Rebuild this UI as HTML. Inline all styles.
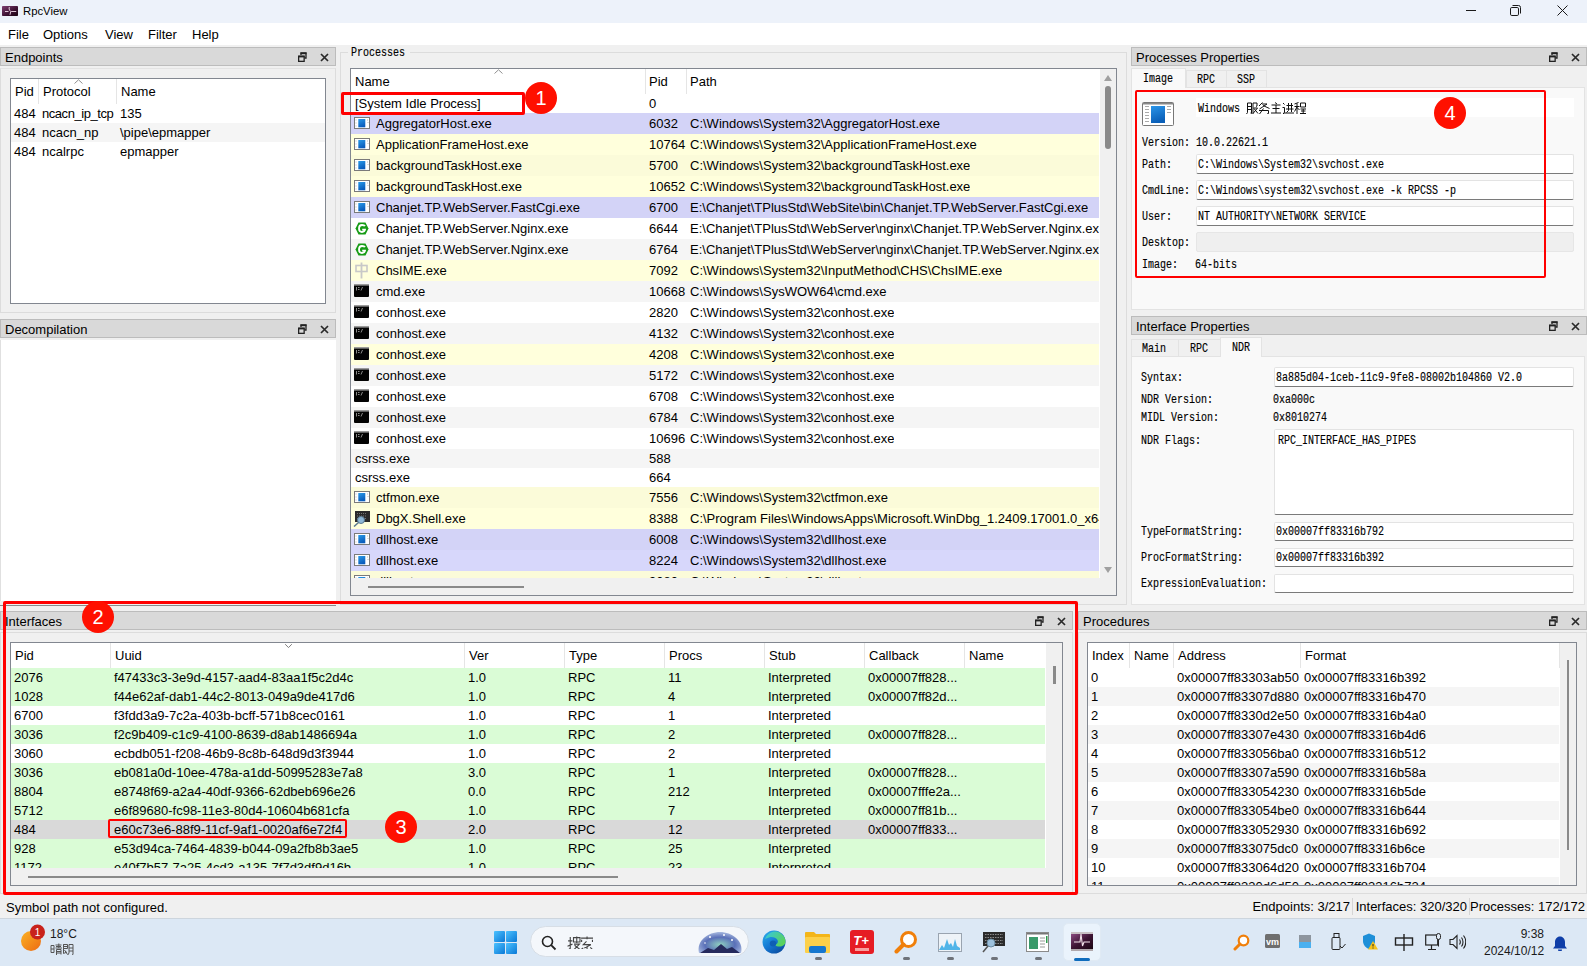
<!DOCTYPE html><html><head><meta charset="utf-8"><style>
*{box-sizing:border-box}
body{margin:0;width:1587px;height:966px;position:relative;overflow:hidden;background:#f0f0f0;font-family:"Liberation Sans",sans-serif;font-size:13px;color:#000}
.t{position:absolute;white-space:nowrap;line-height:16px}
.dt{position:absolute;height:19px;background:#d9d9d9;border:1px solid #bcbcbc;}
.dtt{position:absolute;left:4px;top:2px;line-height:16px;font-size:13px;color:#000}
.m{font-family:"Liberation Mono",monospace;font-size:11px;letter-spacing:-0.6px}
.mm{font-family:"Liberation Mono",monospace;font-size:12px;letter-spacing:0;line-height:16px;transform:scaleX(0.8333);transform-origin:0 0;-webkit-text-stroke:0.15px #000}
.tbl{position:absolute;background:#fff;border:1px solid #828790;overflow:hidden}
.hd{position:absolute;left:0;top:0;height:25px;width:100%;background:#fff}
.hc{position:absolute;top:0;height:25px;line-height:25px;padding-left:4px;border-right:1px solid #e5e5e5;white-space:nowrap}
.row{position:absolute;left:0;white-space:nowrap}
.c{position:absolute;top:0;white-space:nowrap}
</style></head><body>
<svg width="0" height="0" style="position:absolute"><defs><linearGradient id="exeg" x1="0" y1="0" x2="0.4" y2="1"><stop offset="0" stop-color="#2a9ae8"/><stop offset="1" stop-color="#0a5cbc"/></linearGradient></defs></svg>
<div style="position:absolute;left:0px;top:0px;width:1587px;height:23px;background:#edf2fa"></div>
<svg style="position:absolute;left:2px;top:6px" width="16" height="10" viewBox="0 0 16 10"><defs><linearGradient id="rg" x1="0" y1="0" x2="1" y2="1"><stop offset="0" stop-color="#7e3f72"/><stop offset="0.6" stop-color="#3a1030"/><stop offset="1" stop-color="#1c0612"/></linearGradient></defs><rect x="0" y="0" width="16" height="10" rx="0.8" fill="url(#rg)"/><path d="M3 5.5h3.5M7.5 1c-.8 1-.5 3 1.2 4.5M8.7 5.5L8 8.8M9.2 5.5h5" fill="none" stroke="#f2dcea" stroke-width="0.9"/></svg>
<div class="t" style="left:23px;top:4px;font-size:11.3px;line-height:14px">RpcView</div>
<div style="position:absolute;left:1466px;top:10px;width:10px;height:1px;background:#1a1a1a"></div>
<svg style="position:absolute;left:1510px;top:5px" width="11" height="11" viewBox="0 0 11 11"><rect x="0.5" y="2.5" width="8" height="8" rx="1.3" fill="none" stroke="#1a1a1a" stroke-width="1"/><path d="M2.5 0.5h6a2 2 0 0 1 2 2v6" fill="none" stroke="#1a1a1a" stroke-width="1"/></svg>
<svg style="position:absolute;left:1557px;top:5px" width="11" height="11" viewBox="0 0 11 11"><path d="M0.5 0.5L10.5 10.5M10.5 0.5L0.5 10.5" stroke="#1a1a1a" stroke-width="1"/></svg>
<div style="position:absolute;left:0px;top:23px;width:1587px;height:22px;background:#fff"></div>
<div class="t" style="left:8px;top:27px;font-size:13px;line-height:16px">File</div>
<div class="t" style="left:43px;top:27px;font-size:13px;line-height:16px">Options</div>
<div class="t" style="left:105px;top:27px;font-size:13px;line-height:16px">View</div>
<div class="t" style="left:148px;top:27px;font-size:13px;line-height:16px">Filter</div>
<div class="t" style="left:192px;top:27px;font-size:13px;line-height:16px">Help</div>
<div class="dt" style="left:0px;top:47px;width:336px;"><span class="dtt">Endpoints</span><div style="position:absolute;right:28px;top:4px;line-height:0"><svg width="9" height="10" viewBox="0 0 9 10"><path d="M3 3V1h5v5H6.5" fill="none" stroke="#222" stroke-width="1.3"/><path d="M2.5 1.4h6" stroke="#222" stroke-width="1.6"/><rect x="0.65" y="4.15" width="5.5" height="5.2" fill="none" stroke="#222" stroke-width="1.3"/><path d="M0.5 4.6h6" stroke="#222" stroke-width="1.6"/></svg></div><div style="position:absolute;right:6px;top:5px;line-height:0"><svg width="9" height="9" viewBox="0 0 9 9"><path d="M1 1L8 8M8 1L1 8" stroke="#2a2a2a" stroke-width="1.7"/></svg></div></div>
<div style="position:absolute;left:0px;top:68px;width:336px;height:245px;border:1px solid #dcdcdc;border-top-color:#e3e3e3;background:#f0f0f0"></div>
<div class="tbl" style="left:10px;top:78px;width:316px;height:226px;">
<div class="hd" style="width:315px;height:25px">
<div class="c" style="left:4px;top:0;height:25px;line-height:25px">Pid</div>
<div class="c" style="left:32px;top:0;height:25px;line-height:25px">Protocol</div>
<div class="c" style="left:110px;top:0;height:25px;line-height:25px">Name</div>
<div style="position:absolute;left:27px;top:0;width:1px;height:25px;background:#e5e5e5"></div>
<div style="position:absolute;left:105px;top:0;width:1px;height:25px;background:#e5e5e5"></div>
</div>
<div style="position:absolute;left:63px;top:0px;line-height:0"><svg width="9" height="5" viewBox="0 0 9 5"><path d="M0.5 4.5L4.5 0.8L8.5 4.5" fill="none" stroke="#909090" stroke-width="1"/></svg></div>
<div style="position:absolute;left:0;top:25px;width:315px;height:199px;overflow:hidden">
<div class="row" style="top:0px;height:19px;width:315px;background:#fff">
<div class="c" style="left:3px;height:19px;line-height:19px">484</div>
<div class="c" style="left:31px;height:19px;line-height:19px"><span style="letter-spacing:-0.45px">ncacn_ip_tcp</span></div>
<div class="c" style="left:109px;height:19px;line-height:19px">135</div>
</div>
<div class="row" style="top:19px;height:19px;width:315px;background:#f5f5f5">
<div class="c" style="left:3px;height:19px;line-height:19px">484</div>
<div class="c" style="left:31px;height:19px;line-height:19px"><span style="letter-spacing:0px">ncacn_np</span></div>
<div class="c" style="left:109px;height:19px;line-height:19px">\pipe\epmapper</div>
</div>
<div class="row" style="top:38px;height:19px;width:315px;background:#fff">
<div class="c" style="left:3px;height:19px;line-height:19px">484</div>
<div class="c" style="left:31px;height:19px;line-height:19px"><span style="letter-spacing:0px">ncalrpc</span></div>
<div class="c" style="left:109px;height:19px;line-height:19px">epmapper</div>
</div>
</div>

</div>
<div class="dt" style="left:0px;top:319px;width:336px;"><span class="dtt">Decompilation</span><div style="position:absolute;right:28px;top:4px;line-height:0"><svg width="9" height="10" viewBox="0 0 9 10"><path d="M3 3V1h5v5H6.5" fill="none" stroke="#222" stroke-width="1.3"/><path d="M2.5 1.4h6" stroke="#222" stroke-width="1.6"/><rect x="0.65" y="4.15" width="5.5" height="5.2" fill="none" stroke="#222" stroke-width="1.3"/><path d="M0.5 4.6h6" stroke="#222" stroke-width="1.6"/></svg></div><div style="position:absolute;right:6px;top:5px;line-height:0"><svg width="9" height="9" viewBox="0 0 9 9"><path d="M1 1L8 8M8 1L1 8" stroke="#2a2a2a" stroke-width="1.7"/></svg></div></div>
<div style="position:absolute;left:0px;top:340px;width:336px;height:261px;background:#fff;border-left:1px solid #e0e0e0"></div>
<div style="position:absolute;left:340px;top:52px;width:787px;height:553px;border:1px solid #dcdcdc"></div>
<div style="position:absolute;left:348px;top:46px;width:62px;height:12px;background:#f0f0f0"></div>
<div class="t mm" style="left:351px;top:45px;line-height:16px">Processes</div>
<div class="tbl" style="left:350px;top:68px;width:767px;height:528px;">
<div class="hd" style="width:748px;height:25px">
<div class="c" style="left:4px;top:0;height:25px;line-height:25px">Name</div>
<div class="c" style="left:298px;top:0;height:25px;line-height:25px">Pid</div>
<div class="c" style="left:339px;top:0;height:25px;line-height:25px">Path</div>
<div style="position:absolute;left:294px;top:0;width:1px;height:25px;background:#e5e5e5"></div>
<div style="position:absolute;left:335px;top:0;width:1px;height:25px;background:#e5e5e5"></div>
</div>
<div style="position:absolute;left:143px;top:0px;line-height:0"><svg width="9" height="5" viewBox="0 0 9 5"><path d="M0.5 4.5L4.5 0.8L8.5 4.5" fill="none" stroke="#909090" stroke-width="1"/></svg></div>
<div style="position:absolute;left:0;top:25px;width:748px;height:484px;overflow:hidden">
<div class="row" style="top:0px;height:19px;width:748px;background:#ffffff">
<div class="c" style="left:4px;height:19px;line-height:19px">[System Idle Process]</div>
<div class="c" style="left:298px;height:19px;line-height:19px">0</div>
<div class="c" style="left:339px;height:19px;line-height:19px"><span style="display:inline-block;max-width:409px;overflow:hidden"></span></div>
</div>
<div class="row" style="top:19px;height:21px;width:748px;background:#d3d3f7">
<div class="c" style="left:3px;height:21px;line-height:21px"><div style="position:absolute;left:0;top:4px;line-height:0"><svg width="16" height="12" viewBox="0 0 16 12"><rect x="0.5" y="0.5" width="15" height="11" fill="#fff" stroke="#7a7a7a"/><rect x="4.3" y="2" width="7" height="8.3" fill="url(#exeg)"/><path d="M2 2.5v1M2 5.5v1M2 8.5v1M13.5 2.5v1M13.5 5.5h1" stroke="#bbb"/></svg></div></div>
<div class="c" style="left:25px;height:21px;line-height:21px">AggregatorHost.exe</div>
<div class="c" style="left:298px;height:21px;line-height:21px">6032</div>
<div class="c" style="left:339px;height:21px;line-height:21px"><span style="display:inline-block;max-width:409px;overflow:hidden">C:\Windows\System32\AggregatorHost.exe</span></div>
</div>
<div class="row" style="top:40px;height:21px;width:748px;background:#ffffdc">
<div class="c" style="left:3px;height:21px;line-height:21px"><div style="position:absolute;left:0;top:4px;line-height:0"><svg width="16" height="12" viewBox="0 0 16 12"><rect x="0.5" y="0.5" width="15" height="11" fill="#fff" stroke="#7a7a7a"/><rect x="4.3" y="2" width="7" height="8.3" fill="url(#exeg)"/><path d="M2 2.5v1M2 5.5v1M2 8.5v1M13.5 2.5v1M13.5 5.5h1" stroke="#bbb"/></svg></div></div>
<div class="c" style="left:25px;height:21px;line-height:21px">ApplicationFrameHost.exe</div>
<div class="c" style="left:298px;height:21px;line-height:21px">10764</div>
<div class="c" style="left:339px;height:21px;line-height:21px"><span style="display:inline-block;max-width:409px;overflow:hidden">C:\Windows\System32\ApplicationFrameHost.exe</span></div>
</div>
<div class="row" style="top:61px;height:21px;width:748px;background:#fbfbd9">
<div class="c" style="left:3px;height:21px;line-height:21px"><div style="position:absolute;left:0;top:4px;line-height:0"><svg width="16" height="12" viewBox="0 0 16 12"><rect x="0.5" y="0.5" width="15" height="11" fill="#fff" stroke="#7a7a7a"/><rect x="4.3" y="2" width="7" height="8.3" fill="url(#exeg)"/><path d="M2 2.5v1M2 5.5v1M2 8.5v1M13.5 2.5v1M13.5 5.5h1" stroke="#bbb"/></svg></div></div>
<div class="c" style="left:25px;height:21px;line-height:21px">backgroundTaskHost.exe</div>
<div class="c" style="left:298px;height:21px;line-height:21px">5700</div>
<div class="c" style="left:339px;height:21px;line-height:21px"><span style="display:inline-block;max-width:409px;overflow:hidden">C:\Windows\System32\backgroundTaskHost.exe</span></div>
</div>
<div class="row" style="top:82px;height:21px;width:748px;background:#ffffdc">
<div class="c" style="left:3px;height:21px;line-height:21px"><div style="position:absolute;left:0;top:4px;line-height:0"><svg width="16" height="12" viewBox="0 0 16 12"><rect x="0.5" y="0.5" width="15" height="11" fill="#fff" stroke="#7a7a7a"/><rect x="4.3" y="2" width="7" height="8.3" fill="url(#exeg)"/><path d="M2 2.5v1M2 5.5v1M2 8.5v1M13.5 2.5v1M13.5 5.5h1" stroke="#bbb"/></svg></div></div>
<div class="c" style="left:25px;height:21px;line-height:21px">backgroundTaskHost.exe</div>
<div class="c" style="left:298px;height:21px;line-height:21px">10652</div>
<div class="c" style="left:339px;height:21px;line-height:21px"><span style="display:inline-block;max-width:409px;overflow:hidden">C:\Windows\System32\backgroundTaskHost.exe</span></div>
</div>
<div class="row" style="top:103px;height:21px;width:748px;background:#d3d3f7">
<div class="c" style="left:3px;height:21px;line-height:21px"><div style="position:absolute;left:0;top:4px;line-height:0"><svg width="16" height="12" viewBox="0 0 16 12"><rect x="0.5" y="0.5" width="15" height="11" fill="#fff" stroke="#7a7a7a"/><rect x="4.3" y="2" width="7" height="8.3" fill="url(#exeg)"/><path d="M2 2.5v1M2 5.5v1M2 8.5v1M13.5 2.5v1M13.5 5.5h1" stroke="#bbb"/></svg></div></div>
<div class="c" style="left:25px;height:21px;line-height:21px">Chanjet.TP.WebServer.FastCgi.exe</div>
<div class="c" style="left:298px;height:21px;line-height:21px">6700</div>
<div class="c" style="left:339px;height:21px;line-height:21px"><span style="display:inline-block;max-width:409px;overflow:hidden">E:\Chanjet\TPlusStd\WebSite\bin\Chanjet.TP.WebServer.FastCgi.exe</span></div>
</div>
<div class="row" style="top:124px;height:21px;width:748px;background:#ffffff">
<div class="c" style="left:4px;height:21px;line-height:21px"><div style="position:absolute;left:0;top:4px;line-height:0"><svg width="14" height="13" viewBox="0 0 14 13"><path d="M3.5 0.5h7l3 6-3 6h-7l-3-6z" fill="#169b16"/><path d="M10 4.2C9.5 3.2 8.5 3 7 3 5.2 3 4 4.5 4 6.5S5.2 10 7 10c1.6 0 2.7-.7 3-2.3H7.2" fill="none" stroke="#fff" stroke-width="1.8"/></svg></div></div>
<div class="c" style="left:25px;height:21px;line-height:21px">Chanjet.TP.WebServer.Nginx.exe</div>
<div class="c" style="left:298px;height:21px;line-height:21px">6644</div>
<div class="c" style="left:339px;height:21px;line-height:21px"><span style="display:inline-block;max-width:409px;overflow:hidden">E:\Chanjet\TPlusStd\WebServer\nginx\Chanjet.TP.WebServer.Nginx.exe</span></div>
</div>
<div class="row" style="top:145px;height:21px;width:748px;background:#f5f5f5">
<div class="c" style="left:4px;height:21px;line-height:21px"><div style="position:absolute;left:0;top:4px;line-height:0"><svg width="14" height="13" viewBox="0 0 14 13"><path d="M3.5 0.5h7l3 6-3 6h-7l-3-6z" fill="#169b16"/><path d="M10 4.2C9.5 3.2 8.5 3 7 3 5.2 3 4 4.5 4 6.5S5.2 10 7 10c1.6 0 2.7-.7 3-2.3H7.2" fill="none" stroke="#fff" stroke-width="1.8"/></svg></div></div>
<div class="c" style="left:25px;height:21px;line-height:21px">Chanjet.TP.WebServer.Nginx.exe</div>
<div class="c" style="left:298px;height:21px;line-height:21px">6764</div>
<div class="c" style="left:339px;height:21px;line-height:21px"><span style="display:inline-block;max-width:409px;overflow:hidden">E:\Chanjet\TPlusStd\WebServer\nginx\Chanjet.TP.WebServer.Nginx.exe</span></div>
</div>
<div class="row" style="top:166px;height:21px;width:748px;background:#ffffdc">
<div class="c" style="left:3px;height:21px;line-height:21px"><div style="position:absolute;left:0;top:2px;line-height:0"><svg width="16" height="17" viewBox="0 0 16 17"><rect x="2" y="3.5" width="11" height="6" fill="none" stroke="#c8c8c8" stroke-width="1.6"/><path d="M7.5 0.5v16" stroke="#c8c8c8" stroke-width="1.8"/></svg></div></div>
<div class="c" style="left:25px;height:21px;line-height:21px">ChsIME.exe</div>
<div class="c" style="left:298px;height:21px;line-height:21px">7092</div>
<div class="c" style="left:339px;height:21px;line-height:21px"><span style="display:inline-block;max-width:409px;overflow:hidden">C:\Windows\System32\InputMethod\CHS\ChsIME.exe</span></div>
</div>
<div class="row" style="top:187px;height:21px;width:748px;background:#f5f5f5">
<div class="c" style="left:3px;height:21px;line-height:21px"><div style="position:absolute;left:0;top:3px;line-height:0"><svg width="15" height="13" viewBox="0 0 15 13"><rect x="0" y="0" width="15" height="13" rx="1" fill="#030303"/><rect x="0" y="0" width="15" height="1.6" fill="#9a9a9a"/><path d="M2.5 3v3.5M4 3.5h1.5M4 5.5h1.5M7 6.5l1.5-3.5" stroke="#9a9a9a" stroke-width="0.9"/></svg></div></div>
<div class="c" style="left:25px;height:21px;line-height:21px">cmd.exe</div>
<div class="c" style="left:298px;height:21px;line-height:21px">10668</div>
<div class="c" style="left:339px;height:21px;line-height:21px"><span style="display:inline-block;max-width:409px;overflow:hidden">C:\Windows\SysWOW64\cmd.exe</span></div>
</div>
<div class="row" style="top:208px;height:21px;width:748px;background:#ffffff">
<div class="c" style="left:3px;height:21px;line-height:21px"><div style="position:absolute;left:0;top:3px;line-height:0"><svg width="15" height="13" viewBox="0 0 15 13"><rect x="0" y="0" width="15" height="13" rx="1" fill="#030303"/><rect x="0" y="0" width="15" height="1.6" fill="#9a9a9a"/><path d="M2.5 3v3.5M4 3.5h1.5M4 5.5h1.5M7 6.5l1.5-3.5" stroke="#9a9a9a" stroke-width="0.9"/></svg></div></div>
<div class="c" style="left:25px;height:21px;line-height:21px">conhost.exe</div>
<div class="c" style="left:298px;height:21px;line-height:21px">2820</div>
<div class="c" style="left:339px;height:21px;line-height:21px"><span style="display:inline-block;max-width:409px;overflow:hidden">C:\Windows\System32\conhost.exe</span></div>
</div>
<div class="row" style="top:229px;height:21px;width:748px;background:#f5f5f5">
<div class="c" style="left:3px;height:21px;line-height:21px"><div style="position:absolute;left:0;top:3px;line-height:0"><svg width="15" height="13" viewBox="0 0 15 13"><rect x="0" y="0" width="15" height="13" rx="1" fill="#030303"/><rect x="0" y="0" width="15" height="1.6" fill="#9a9a9a"/><path d="M2.5 3v3.5M4 3.5h1.5M4 5.5h1.5M7 6.5l1.5-3.5" stroke="#9a9a9a" stroke-width="0.9"/></svg></div></div>
<div class="c" style="left:25px;height:21px;line-height:21px">conhost.exe</div>
<div class="c" style="left:298px;height:21px;line-height:21px">4132</div>
<div class="c" style="left:339px;height:21px;line-height:21px"><span style="display:inline-block;max-width:409px;overflow:hidden">C:\Windows\System32\conhost.exe</span></div>
</div>
<div class="row" style="top:250px;height:21px;width:748px;background:#ffffdc">
<div class="c" style="left:3px;height:21px;line-height:21px"><div style="position:absolute;left:0;top:3px;line-height:0"><svg width="15" height="13" viewBox="0 0 15 13"><rect x="0" y="0" width="15" height="13" rx="1" fill="#030303"/><rect x="0" y="0" width="15" height="1.6" fill="#9a9a9a"/><path d="M2.5 3v3.5M4 3.5h1.5M4 5.5h1.5M7 6.5l1.5-3.5" stroke="#9a9a9a" stroke-width="0.9"/></svg></div></div>
<div class="c" style="left:25px;height:21px;line-height:21px">conhost.exe</div>
<div class="c" style="left:298px;height:21px;line-height:21px">4208</div>
<div class="c" style="left:339px;height:21px;line-height:21px"><span style="display:inline-block;max-width:409px;overflow:hidden">C:\Windows\System32\conhost.exe</span></div>
</div>
<div class="row" style="top:271px;height:21px;width:748px;background:#f5f5f5">
<div class="c" style="left:3px;height:21px;line-height:21px"><div style="position:absolute;left:0;top:3px;line-height:0"><svg width="15" height="13" viewBox="0 0 15 13"><rect x="0" y="0" width="15" height="13" rx="1" fill="#030303"/><rect x="0" y="0" width="15" height="1.6" fill="#9a9a9a"/><path d="M2.5 3v3.5M4 3.5h1.5M4 5.5h1.5M7 6.5l1.5-3.5" stroke="#9a9a9a" stroke-width="0.9"/></svg></div></div>
<div class="c" style="left:25px;height:21px;line-height:21px">conhost.exe</div>
<div class="c" style="left:298px;height:21px;line-height:21px">5172</div>
<div class="c" style="left:339px;height:21px;line-height:21px"><span style="display:inline-block;max-width:409px;overflow:hidden">C:\Windows\System32\conhost.exe</span></div>
</div>
<div class="row" style="top:292px;height:21px;width:748px;background:#ffffff">
<div class="c" style="left:3px;height:21px;line-height:21px"><div style="position:absolute;left:0;top:3px;line-height:0"><svg width="15" height="13" viewBox="0 0 15 13"><rect x="0" y="0" width="15" height="13" rx="1" fill="#030303"/><rect x="0" y="0" width="15" height="1.6" fill="#9a9a9a"/><path d="M2.5 3v3.5M4 3.5h1.5M4 5.5h1.5M7 6.5l1.5-3.5" stroke="#9a9a9a" stroke-width="0.9"/></svg></div></div>
<div class="c" style="left:25px;height:21px;line-height:21px">conhost.exe</div>
<div class="c" style="left:298px;height:21px;line-height:21px">6708</div>
<div class="c" style="left:339px;height:21px;line-height:21px"><span style="display:inline-block;max-width:409px;overflow:hidden">C:\Windows\System32\conhost.exe</span></div>
</div>
<div class="row" style="top:313px;height:21px;width:748px;background:#f5f5f5">
<div class="c" style="left:3px;height:21px;line-height:21px"><div style="position:absolute;left:0;top:3px;line-height:0"><svg width="15" height="13" viewBox="0 0 15 13"><rect x="0" y="0" width="15" height="13" rx="1" fill="#030303"/><rect x="0" y="0" width="15" height="1.6" fill="#9a9a9a"/><path d="M2.5 3v3.5M4 3.5h1.5M4 5.5h1.5M7 6.5l1.5-3.5" stroke="#9a9a9a" stroke-width="0.9"/></svg></div></div>
<div class="c" style="left:25px;height:21px;line-height:21px">conhost.exe</div>
<div class="c" style="left:298px;height:21px;line-height:21px">6784</div>
<div class="c" style="left:339px;height:21px;line-height:21px"><span style="display:inline-block;max-width:409px;overflow:hidden">C:\Windows\System32\conhost.exe</span></div>
</div>
<div class="row" style="top:334px;height:21px;width:748px;background:#ffffff">
<div class="c" style="left:3px;height:21px;line-height:21px"><div style="position:absolute;left:0;top:3px;line-height:0"><svg width="15" height="13" viewBox="0 0 15 13"><rect x="0" y="0" width="15" height="13" rx="1" fill="#030303"/><rect x="0" y="0" width="15" height="1.6" fill="#9a9a9a"/><path d="M2.5 3v3.5M4 3.5h1.5M4 5.5h1.5M7 6.5l1.5-3.5" stroke="#9a9a9a" stroke-width="0.9"/></svg></div></div>
<div class="c" style="left:25px;height:21px;line-height:21px">conhost.exe</div>
<div class="c" style="left:298px;height:21px;line-height:21px">10696</div>
<div class="c" style="left:339px;height:21px;line-height:21px"><span style="display:inline-block;max-width:409px;overflow:hidden">C:\Windows\System32\conhost.exe</span></div>
</div>
<div class="row" style="top:355px;height:19px;width:748px;background:#f5f5f5">
<div class="c" style="left:4px;height:19px;line-height:19px">csrss.exe</div>
<div class="c" style="left:298px;height:19px;line-height:19px">588</div>
<div class="c" style="left:339px;height:19px;line-height:19px"><span style="display:inline-block;max-width:409px;overflow:hidden"></span></div>
</div>
<div class="row" style="top:374px;height:19px;width:748px;background:#ffffff">
<div class="c" style="left:4px;height:19px;line-height:19px">csrss.exe</div>
<div class="c" style="left:298px;height:19px;line-height:19px">664</div>
<div class="c" style="left:339px;height:19px;line-height:19px"><span style="display:inline-block;max-width:409px;overflow:hidden"></span></div>
</div>
<div class="row" style="top:393px;height:21px;width:748px;background:#fbfbd9">
<div class="c" style="left:3px;height:21px;line-height:21px"><div style="position:absolute;left:0;top:4px;line-height:0"><svg width="16" height="12" viewBox="0 0 16 12"><rect x="0.5" y="0.5" width="15" height="11" fill="#fff" stroke="#7a7a7a"/><rect x="4.3" y="2" width="7" height="8.3" fill="url(#exeg)"/><path d="M2 2.5v1M2 5.5v1M2 8.5v1M13.5 2.5v1M13.5 5.5h1" stroke="#bbb"/></svg></div></div>
<div class="c" style="left:25px;height:21px;line-height:21px">ctfmon.exe</div>
<div class="c" style="left:298px;height:21px;line-height:21px">7556</div>
<div class="c" style="left:339px;height:21px;line-height:21px"><span style="display:inline-block;max-width:409px;overflow:hidden">C:\Windows\System32\ctfmon.exe</span></div>
</div>
<div class="row" style="top:414px;height:21px;width:748px;background:#ffffdc">
<div class="c" style="left:2px;height:21px;line-height:21px"><div style="position:absolute;left:0;top:2px;line-height:0"><svg width="17" height="17" viewBox="0 0 17 17"><rect x="2" y="1" width="15" height="11" fill="#2a2a2a"/><path d="M4 3.5h10M4 6h10M4 8.5h10" stroke="#888" stroke-width="0.8" stroke-dasharray="1 1"/><circle cx="8" cy="10" r="3.5" fill="#8fb8d8" stroke="#5a7a90"/><path d="M5.5 12.5L1 16.5" stroke="#5a7a90" stroke-width="1.5"/></svg></div></div>
<div class="c" style="left:25px;height:21px;line-height:21px">DbgX.Shell.exe</div>
<div class="c" style="left:298px;height:21px;line-height:21px">8388</div>
<div class="c" style="left:339px;height:21px;line-height:21px"><span style="display:inline-block;max-width:409px;overflow:hidden">C:\Program Files\WindowsApps\Microsoft.WinDbg_1.2409.17001.0_x64</span></div>
</div>
<div class="row" style="top:435px;height:21px;width:748px;background:#d3d3f7">
<div class="c" style="left:3px;height:21px;line-height:21px"><div style="position:absolute;left:0;top:4px;line-height:0"><svg width="16" height="12" viewBox="0 0 16 12"><rect x="0.5" y="0.5" width="15" height="11" fill="#fff" stroke="#7a7a7a"/><rect x="4.3" y="2" width="7" height="8.3" fill="url(#exeg)"/><path d="M2 2.5v1M2 5.5v1M2 8.5v1M13.5 2.5v1M13.5 5.5h1" stroke="#bbb"/></svg></div></div>
<div class="c" style="left:25px;height:21px;line-height:21px">dllhost.exe</div>
<div class="c" style="left:298px;height:21px;line-height:21px">6008</div>
<div class="c" style="left:339px;height:21px;line-height:21px"><span style="display:inline-block;max-width:409px;overflow:hidden">C:\Windows\System32\dllhost.exe</span></div>
</div>
<div class="row" style="top:456px;height:21px;width:748px;background:#d7d7fb">
<div class="c" style="left:3px;height:21px;line-height:21px"><div style="position:absolute;left:0;top:4px;line-height:0"><svg width="16" height="12" viewBox="0 0 16 12"><rect x="0.5" y="0.5" width="15" height="11" fill="#fff" stroke="#7a7a7a"/><rect x="4.3" y="2" width="7" height="8.3" fill="url(#exeg)"/><path d="M2 2.5v1M2 5.5v1M2 8.5v1M13.5 2.5v1M13.5 5.5h1" stroke="#bbb"/></svg></div></div>
<div class="c" style="left:25px;height:21px;line-height:21px">dllhost.exe</div>
<div class="c" style="left:298px;height:21px;line-height:21px">8224</div>
<div class="c" style="left:339px;height:21px;line-height:21px"><span style="display:inline-block;max-width:409px;overflow:hidden">C:\Windows\System32\dllhost.exe</span></div>
</div>
<div class="row" style="top:477px;height:21px;width:748px;background:#fbfbd9">
<div class="c" style="left:3px;height:21px;line-height:21px"><div style="position:absolute;left:0;top:4px;line-height:0"><svg width="16" height="12" viewBox="0 0 16 12"><rect x="0.5" y="0.5" width="15" height="11" fill="#fff" stroke="#7a7a7a"/><rect x="4.3" y="2" width="7" height="8.3" fill="url(#exeg)"/><path d="M2 2.5v1M2 5.5v1M2 8.5v1M13.5 2.5v1M13.5 5.5h1" stroke="#bbb"/></svg></div></div>
<div class="c" style="left:25px;height:21px;line-height:21px">dllhost.exe</div>
<div class="c" style="left:298px;height:21px;line-height:21px">9080</div>
<div class="c" style="left:339px;height:21px;line-height:21px"><span style="display:inline-block;max-width:409px;overflow:hidden">C:\Windows\System32\dllhost.exe</span></div>
</div>
</div>
<div style="position:absolute;left:749px;top:0;width:16px;height:509px;background:#f0f0f0"></div><svg style="position:absolute;left:753px;top:6px" width="8" height="6" viewBox="0 0 8 6"><path d="M0 6L4 0L8 6z" fill="#a0a0a0"/></svg><div style="position:absolute;left:754px;top:17px;width:6px;height:63px;background:#8a8a8a;border-radius:3px"></div><svg style="position:absolute;left:753px;top:498px" width="8" height="6" viewBox="0 0 8 6"><path d="M0 0L4 6L8 0z" fill="#a0a0a0"/></svg><div style="position:absolute;left:0;top:509px;width:765px;height:17px;background:#f0f0f0"></div><div style="position:absolute;left:17px;top:517px;width:156px;height:2px;background:#8a8a8a"></div>
</div>
<div class="dt" style="left:1131px;top:47px;width:456px;"><span class="dtt">Processes Properties</span><div style="position:absolute;right:28px;top:4px;line-height:0"><svg width="9" height="10" viewBox="0 0 9 10"><path d="M3 3V1h5v5H6.5" fill="none" stroke="#222" stroke-width="1.3"/><path d="M2.5 1.4h6" stroke="#222" stroke-width="1.6"/><rect x="0.65" y="4.15" width="5.5" height="5.2" fill="none" stroke="#222" stroke-width="1.3"/><path d="M0.5 4.6h6" stroke="#222" stroke-width="1.6"/></svg></div><div style="position:absolute;right:6px;top:5px;line-height:0"><svg width="9" height="9" viewBox="0 0 9 9"><path d="M1 1L8 8M8 1L1 8" stroke="#2a2a2a" stroke-width="1.7"/></svg></div></div>
<div style="position:absolute;left:1131px;top:87px;width:454px;height:223px;background:#f9f9f9;border:1px solid #e3e3e3"></div>
<div style="position:absolute;left:1131px;top:68px;width:55px;height:20px;background:#f9f9f9;border:1px solid #e3e3e3;border-bottom:none"></div>
<div class="t mm" style="left:1143px;top:71px;">Image</div>
<div style="position:absolute;left:1186px;top:70px;width:41px;height:17px;background:#f0f0f0;border:1px solid #e3e3e3;border-bottom:none"></div>
<div class="t mm" style="left:1197px;top:72px;">RPC</div>
<div style="position:absolute;left:1226px;top:70px;width:41px;height:17px;background:#f0f0f0;border:1px solid #e3e3e3;border-bottom:none"></div>
<div class="t mm" style="left:1237px;top:72px;">SSP</div>
<svg style="position:absolute;left:1142px;top:102px" width="32" height="24" viewBox="0 0 32 24"><defs><linearGradient id="bg1" x1="0" y1="0" x2="0.3" y2="1"><stop offset="0" stop-color="#2b95e8"/><stop offset="1" stop-color="#0a5fb8"/></linearGradient></defs><rect x="0.5" y="0.5" width="31" height="23" rx="1" fill="#fff" stroke="#777"/><rect x="1" y="1" width="30" height="1.5" fill="#888"/><rect x="9" y="4" width="14" height="17" fill="url(#bg1)"/><path d="M3 4.5h4M3 7.5h4M3 10.5h4M3 13.5h4M3 16.5h4M3 19.5h4M25 4.5h4M25 7.5h4M25 10.5h4" stroke="#aaa" stroke-width="1"/></svg>
<div style="position:absolute;left:1196px;top:98px;width:378px;height:19px;background:#fff"></div>
<div class="t mm" style="left:1198px;top:101px;">Windows </div>
<svg style="position:absolute;left:1246px;top:102px" width="60" height="12" viewBox="0 0 60.00 12"><path transform="translate(0.00,0)" d="M1.5 1v9.5l-1 1.5M1.5 1h4v10.5l-1 -.5M1.5 4.5h4M1.5 7.5h4M7 1h4v3l-1 .5M7 1v11M7.5 6h4l-4.5 5.5M8 6.5l4 5" fill="none" stroke="#111" stroke-width="1.00"/><path transform="translate(12.00,0)" d="M4.5 .5l-3.5 3.5M4 2h5l-7.5 5M5 3.5l6.5 3M1 8.5h9.5v3l-1.5 .5M5.5 6.5l-4 5.5" fill="none" stroke="#111" stroke-width="1.00"/><path transform="translate(24.00,0)" d="M5 .5l2 1.5M1.5 3h9M2.5 6.5h7M1 11h10M6 3v8" fill="none" stroke="#111" stroke-width="1.00"/><path transform="translate(36.00,0)" d="M1 1l1.5 1.5M.5 5.5h2v5l-1.5 1.5M1.5 11h10.5M4.5 3.5h6.5M4 7h7.5M6.5 1v7.5l-2 2M9.5 1v9" fill="none" stroke="#111" stroke-width="1.00"/><path transform="translate(48.00,0)" d="M4.5 .5l-4 1.5M.5 4.5h5M3 1.5v10.5M3 5l-2.5 4.5M3 5.5l2.5 2.5M6.5 1h5v4h-5zM6.5 7h5.5M7 9h4.5M6 11.5h6M9.2 7v4.5" fill="none" stroke="#111" stroke-width="1.00"/></svg>
<div class="t mm" style="left:1142px;top:135px;">Version:</div>
<div class="t mm" style="left:1196px;top:135px;">10.0.22621.1</div>
<div class="t mm" style="left:1142px;top:157px;">Path:</div>
<div style="position:absolute;left:1196px;top:154px;width:378px;height:20px;background:#fff;border:1px solid #e3e3e3;border-bottom:1.5px solid #7a7a7a;border-radius:2px"></div>
<div class="t mm" style="left:1198px;top:157px;">C:\Windows\System32\svchost.exe</div>
<div class="t mm" style="left:1142px;top:183px;">CmdLine:</div>
<div style="position:absolute;left:1196px;top:180px;width:378px;height:20px;background:#fff;border:1px solid #e3e3e3;border-bottom:1.5px solid #7a7a7a;border-radius:2px"></div>
<div class="t mm" style="left:1198px;top:183px;">C:\Windows\system32\svchost.exe -k RPCSS -p</div>
<div class="t mm" style="left:1142px;top:209px;">User:</div>
<div style="position:absolute;left:1196px;top:206px;width:378px;height:20px;background:#fff;border:1px solid #e3e3e3;border-bottom:1.5px solid #7a7a7a;border-radius:2px"></div>
<div class="t mm" style="left:1198px;top:209px;">NT AUTHORITY\NETWORK SERVICE</div>
<div class="t mm" style="left:1142px;top:235px;">Desktop:</div>
<div style="position:absolute;left:1196px;top:232px;width:378px;height:20px;background:#efefef;border:1px solid #e6e6e6;border-radius:2px"></div>
<div class="t mm" style="left:1142px;top:257px;">Image:</div>
<div class="t mm" style="left:1195px;top:257px;">64-bits</div>
<div class="dt" style="left:1131px;top:316px;width:456px;"><span class="dtt">Interface Properties</span><div style="position:absolute;right:28px;top:4px;line-height:0"><svg width="9" height="10" viewBox="0 0 9 10"><path d="M3 3V1h5v5H6.5" fill="none" stroke="#222" stroke-width="1.3"/><path d="M2.5 1.4h6" stroke="#222" stroke-width="1.6"/><rect x="0.65" y="4.15" width="5.5" height="5.2" fill="none" stroke="#222" stroke-width="1.3"/><path d="M0.5 4.6h6" stroke="#222" stroke-width="1.6"/></svg></div><div style="position:absolute;right:6px;top:5px;line-height:0"><svg width="9" height="9" viewBox="0 0 9 9"><path d="M1 1L8 8M8 1L1 8" stroke="#2a2a2a" stroke-width="1.7"/></svg></div></div>
<div style="position:absolute;left:1131px;top:356px;width:454px;height:249px;background:#f9f9f9;border:1px solid #e3e3e3"></div>
<div style="position:absolute;left:1131px;top:339px;width:48px;height:17px;background:#f0f0f0;border:1px solid #e3e3e3;border-bottom:none"></div>
<div class="t mm" style="left:1142px;top:341px;">Main</div>
<div style="position:absolute;left:1178px;top:339px;width:43px;height:17px;background:#f0f0f0;border:1px solid #e3e3e3;border-bottom:none"></div>
<div class="t mm" style="left:1190px;top:341px;">RPC</div>
<div style="position:absolute;left:1220px;top:337px;width:42px;height:20px;background:#f9f9f9;border:1px solid #e3e3e3;border-bottom:none"></div>
<div class="t mm" style="left:1232px;top:340px;">NDR</div>
<div class="t mm" style="left:1141px;top:370px;">Syntax:</div>
<div style="position:absolute;left:1274px;top:367px;width:300px;height:20px;background:#fff;border:1px solid #e3e3e3;border-bottom:1.5px solid #7a7a7a;border-radius:2px"></div>
<div class="t mm" style="left:1276px;top:370px;">8a885d04-1ceb-11c9-9fe8-08002b104860 V2.0</div>
<div class="t mm" style="left:1141px;top:392px;">NDR Version:</div>
<div class="t mm" style="left:1273px;top:392px;">0xa000c</div>
<div class="t mm" style="left:1141px;top:410px;">MIDL Version:</div>
<div class="t mm" style="left:1273px;top:410px;">0x8010274</div>
<div class="t mm" style="left:1141px;top:433px;">NDR Flags:</div>
<div style="position:absolute;left:1274px;top:429px;width:300px;height:86px;background:#fff;border:1px solid #e3e3e3;border-bottom:1.5px solid #7a7a7a;border-radius:2px"></div>
<div class="t mm" style="left:1278px;top:433px;">RPC_INTERFACE_HAS_PIPES</div>
<div class="t mm" style="left:1141px;top:524px;">TypeFormatString:</div>
<div style="position:absolute;left:1274px;top:522px;width:300px;height:19px;background:#fff;border:1px solid #e3e3e3;border-bottom:1.5px solid #7a7a7a;border-radius:2px"></div>
<div class="t mm" style="left:1276px;top:524px;">0x00007ff83316b792</div>
<div class="t mm" style="left:1141px;top:550px;">ProcFormatString:</div>
<div style="position:absolute;left:1274px;top:548px;width:300px;height:19px;background:#fff;border:1px solid #e3e3e3;border-bottom:1.5px solid #7a7a7a;border-radius:2px"></div>
<div class="t mm" style="left:1276px;top:550px;">0x00007ff83316b392</div>
<div class="t mm" style="left:1141px;top:576px;">ExpressionEvaluation:</div>
<div style="position:absolute;left:1274px;top:574px;width:300px;height:19px;background:#fff;border:1px solid #e3e3e3;border-bottom:1.5px solid #7a7a7a;border-radius:2px"></div>
<div style="position:absolute;left:0;top:605px;width:336px;height:1px;background:#8a8a8a"></div>
<div class="dt" style="left:0px;top:611px;width:1073px;"><span class="dtt">Interfaces</span><div style="position:absolute;right:28px;top:4px;line-height:0"><svg width="9" height="10" viewBox="0 0 9 10"><path d="M3 3V1h5v5H6.5" fill="none" stroke="#222" stroke-width="1.3"/><path d="M2.5 1.4h6" stroke="#222" stroke-width="1.6"/><rect x="0.65" y="4.15" width="5.5" height="5.2" fill="none" stroke="#222" stroke-width="1.3"/><path d="M0.5 4.6h6" stroke="#222" stroke-width="1.6"/></svg></div><div style="position:absolute;right:6px;top:5px;line-height:0"><svg width="9" height="9" viewBox="0 0 9 9"><path d="M1 1L8 8M8 1L1 8" stroke="#2a2a2a" stroke-width="1.7"/></svg></div></div>
<div style="position:absolute;left:0px;top:632px;width:1073px;height:262px;border:1px solid #dcdcdc;background:#f0f0f0"></div>
<div class="tbl" style="left:10px;top:642px;width:1053px;height:244px;">
<div class="hd" style="width:1034px;height:25px">
<div class="c" style="left:4px;top:0;height:25px;line-height:25px">Pid</div>
<div class="c" style="left:104px;top:0;height:25px;line-height:25px">Uuid</div>
<div class="c" style="left:458px;top:0;height:25px;line-height:25px">Ver</div>
<div class="c" style="left:558px;top:0;height:25px;line-height:25px">Type</div>
<div class="c" style="left:658px;top:0;height:25px;line-height:25px">Procs</div>
<div class="c" style="left:758px;top:0;height:25px;line-height:25px">Stub</div>
<div class="c" style="left:858px;top:0;height:25px;line-height:25px">Callback</div>
<div class="c" style="left:958px;top:0;height:25px;line-height:25px">Name</div>
<div style="position:absolute;left:99px;top:0;width:1px;height:25px;background:#e5e5e5"></div>
<div style="position:absolute;left:453px;top:0;width:1px;height:25px;background:#e5e5e5"></div>
<div style="position:absolute;left:553px;top:0;width:1px;height:25px;background:#e5e5e5"></div>
<div style="position:absolute;left:653px;top:0;width:1px;height:25px;background:#e5e5e5"></div>
<div style="position:absolute;left:753px;top:0;width:1px;height:25px;background:#e5e5e5"></div>
<div style="position:absolute;left:853px;top:0;width:1px;height:25px;background:#e5e5e5"></div>
<div style="position:absolute;left:953px;top:0;width:1px;height:25px;background:#e5e5e5"></div>
</div>
<div style="position:absolute;left:273px;top:0px;line-height:0"><svg width="9" height="6" viewBox="0 0 9 6"><path d="M1.2 1.2L4.5 4.6L7.8 1.2" fill="none" stroke="#808080" stroke-width="1"/></svg></div>
<div style="position:absolute;left:0;top:25px;width:1034px;height:200px;overflow:hidden">
<div class="row" style="top:0px;height:19px;width:1034px;background:#dafcd6">
<div class="c" style="left:3px;height:19px;line-height:19px">2076</div>
<div class="c" style="left:103px;height:19px;line-height:19px">f47433c3-3e9d-4157-aad4-83aa1f5c2d4c</div>
<div class="c" style="left:457px;height:19px;line-height:19px">1.0</div>
<div class="c" style="left:557px;height:19px;line-height:19px">RPC</div>
<div class="c" style="left:657px;height:19px;line-height:19px">11</div>
<div class="c" style="left:757px;height:19px;line-height:19px">Interpreted</div>
<div class="c" style="left:857px;height:19px;line-height:19px">0x00007ff828...</div>
</div>
<div class="row" style="top:19px;height:19px;width:1034px;background:#dafcd6">
<div class="c" style="left:3px;height:19px;line-height:19px">1028</div>
<div class="c" style="left:103px;height:19px;line-height:19px">f44e62af-dab1-44c2-8013-049a9de417d6</div>
<div class="c" style="left:457px;height:19px;line-height:19px">1.0</div>
<div class="c" style="left:557px;height:19px;line-height:19px">RPC</div>
<div class="c" style="left:657px;height:19px;line-height:19px">4</div>
<div class="c" style="left:757px;height:19px;line-height:19px">Interpreted</div>
<div class="c" style="left:857px;height:19px;line-height:19px">0x00007ff82d...</div>
</div>
<div class="row" style="top:38px;height:19px;width:1034px;background:#ffffff">
<div class="c" style="left:3px;height:19px;line-height:19px">6700</div>
<div class="c" style="left:103px;height:19px;line-height:19px">f3fdd3a9-7c2a-403b-bcff-571b8cec0161</div>
<div class="c" style="left:457px;height:19px;line-height:19px">1.0</div>
<div class="c" style="left:557px;height:19px;line-height:19px">RPC</div>
<div class="c" style="left:657px;height:19px;line-height:19px">1</div>
<div class="c" style="left:757px;height:19px;line-height:19px">Interpreted</div>
<div class="c" style="left:857px;height:19px;line-height:19px"></div>
</div>
<div class="row" style="top:57px;height:19px;width:1034px;background:#dafcd6">
<div class="c" style="left:3px;height:19px;line-height:19px">3036</div>
<div class="c" style="left:103px;height:19px;line-height:19px">f2c9b409-c1c9-4100-8639-d8ab1486694a</div>
<div class="c" style="left:457px;height:19px;line-height:19px">1.0</div>
<div class="c" style="left:557px;height:19px;line-height:19px">RPC</div>
<div class="c" style="left:657px;height:19px;line-height:19px">2</div>
<div class="c" style="left:757px;height:19px;line-height:19px">Interpreted</div>
<div class="c" style="left:857px;height:19px;line-height:19px">0x00007ff828...</div>
</div>
<div class="row" style="top:76px;height:19px;width:1034px;background:#ffffff">
<div class="c" style="left:3px;height:19px;line-height:19px">3060</div>
<div class="c" style="left:103px;height:19px;line-height:19px">ecbdb051-f208-46b9-8c8b-648d9d3f3944</div>
<div class="c" style="left:457px;height:19px;line-height:19px">1.0</div>
<div class="c" style="left:557px;height:19px;line-height:19px">RPC</div>
<div class="c" style="left:657px;height:19px;line-height:19px">2</div>
<div class="c" style="left:757px;height:19px;line-height:19px">Interpreted</div>
<div class="c" style="left:857px;height:19px;line-height:19px"></div>
</div>
<div class="row" style="top:95px;height:19px;width:1034px;background:#dafcd6">
<div class="c" style="left:3px;height:19px;line-height:19px">3036</div>
<div class="c" style="left:103px;height:19px;line-height:19px">eb081a0d-10ee-478a-a1dd-50995283e7a8</div>
<div class="c" style="left:457px;height:19px;line-height:19px">3.0</div>
<div class="c" style="left:557px;height:19px;line-height:19px">RPC</div>
<div class="c" style="left:657px;height:19px;line-height:19px">1</div>
<div class="c" style="left:757px;height:19px;line-height:19px">Interpreted</div>
<div class="c" style="left:857px;height:19px;line-height:19px">0x00007ff828...</div>
</div>
<div class="row" style="top:114px;height:19px;width:1034px;background:#dafcd6">
<div class="c" style="left:3px;height:19px;line-height:19px">8804</div>
<div class="c" style="left:103px;height:19px;line-height:19px">e8748f69-a2a4-40df-9366-62dbeb696e26</div>
<div class="c" style="left:457px;height:19px;line-height:19px">0.0</div>
<div class="c" style="left:557px;height:19px;line-height:19px">RPC</div>
<div class="c" style="left:657px;height:19px;line-height:19px">212</div>
<div class="c" style="left:757px;height:19px;line-height:19px">Interpreted</div>
<div class="c" style="left:857px;height:19px;line-height:19px">0x00007fffe2a...</div>
</div>
<div class="row" style="top:133px;height:19px;width:1034px;background:#dafcd6">
<div class="c" style="left:3px;height:19px;line-height:19px">5712</div>
<div class="c" style="left:103px;height:19px;line-height:19px">e6f89680-fc98-11e3-80d4-10604b681cfa</div>
<div class="c" style="left:457px;height:19px;line-height:19px">1.0</div>
<div class="c" style="left:557px;height:19px;line-height:19px">RPC</div>
<div class="c" style="left:657px;height:19px;line-height:19px">7</div>
<div class="c" style="left:757px;height:19px;line-height:19px">Interpreted</div>
<div class="c" style="left:857px;height:19px;line-height:19px">0x00007ff81b...</div>
</div>
<div class="row" style="top:152px;height:19px;width:1034px;background:#d9d9d9">
<div class="c" style="left:3px;height:19px;line-height:19px">484</div>
<div class="c" style="left:103px;height:19px;line-height:19px">e60c73e6-88f9-11cf-9af1-0020af6e72f4</div>
<div class="c" style="left:457px;height:19px;line-height:19px">2.0</div>
<div class="c" style="left:557px;height:19px;line-height:19px">RPC</div>
<div class="c" style="left:657px;height:19px;line-height:19px">12</div>
<div class="c" style="left:757px;height:19px;line-height:19px">Interpreted</div>
<div class="c" style="left:857px;height:19px;line-height:19px">0x00007ff833...</div>
</div>
<div class="row" style="top:171px;height:19px;width:1034px;background:#dafcd6">
<div class="c" style="left:3px;height:19px;line-height:19px">928</div>
<div class="c" style="left:103px;height:19px;line-height:19px">e53d94ca-7464-4839-b044-09a2fb8b3ae5</div>
<div class="c" style="left:457px;height:19px;line-height:19px">1.0</div>
<div class="c" style="left:557px;height:19px;line-height:19px">RPC</div>
<div class="c" style="left:657px;height:19px;line-height:19px">25</div>
<div class="c" style="left:757px;height:19px;line-height:19px">Interpreted</div>
<div class="c" style="left:857px;height:19px;line-height:19px"></div>
</div>
<div class="row" style="top:190px;height:19px;width:1034px;background:#dafcd6">
<div class="c" style="left:3px;height:19px;line-height:19px">1172</div>
<div class="c" style="left:103px;height:19px;line-height:19px">e40f7b57-7a25-4cd3-a135-7f7d3df9d16b</div>
<div class="c" style="left:457px;height:19px;line-height:19px">1.0</div>
<div class="c" style="left:557px;height:19px;line-height:19px">RPC</div>
<div class="c" style="left:657px;height:19px;line-height:19px">23</div>
<div class="c" style="left:757px;height:19px;line-height:19px">Interpreted</div>
<div class="c" style="left:857px;height:19px;line-height:19px"></div>
</div>
</div>
<div style="position:absolute;left:1035px;top:0;width:16px;height:225px;background:#f0f0f0"></div><div style="position:absolute;left:1042px;top:23px;width:2.5px;height:18px;background:#8a8a8a"></div><div style="position:absolute;left:0;top:225px;width:1051px;height:17px;background:#f0f0f0"></div><div style="position:absolute;left:17px;top:233px;width:590px;height:2px;background:#8a8a8a"></div>
</div>
<div class="dt" style="left:1078px;top:611px;width:509px;"><span class="dtt">Procedures</span><div style="position:absolute;right:28px;top:4px;line-height:0"><svg width="9" height="10" viewBox="0 0 9 10"><path d="M3 3V1h5v5H6.5" fill="none" stroke="#222" stroke-width="1.3"/><path d="M2.5 1.4h6" stroke="#222" stroke-width="1.6"/><rect x="0.65" y="4.15" width="5.5" height="5.2" fill="none" stroke="#222" stroke-width="1.3"/><path d="M0.5 4.6h6" stroke="#222" stroke-width="1.6"/></svg></div><div style="position:absolute;right:6px;top:5px;line-height:0"><svg width="9" height="9" viewBox="0 0 9 9"><path d="M1 1L8 8M8 1L1 8" stroke="#2a2a2a" stroke-width="1.7"/></svg></div></div>
<div style="position:absolute;left:1078px;top:632px;width:509px;height:262px;border:1px solid #dcdcdc;background:#f0f0f0"></div>
<div class="tbl" style="left:1087px;top:642px;width:490px;height:244px;">
<div class="hd" style="width:471px;height:25px">
<div class="c" style="left:4px;top:0;height:25px;line-height:25px">Index</div>
<div class="c" style="left:46px;top:0;height:25px;line-height:25px">Name</div>
<div class="c" style="left:90px;top:0;height:25px;line-height:25px">Address</div>
<div class="c" style="left:217px;top:0;height:25px;line-height:25px">Format</div>
<div style="position:absolute;left:41px;top:0;width:1px;height:25px;background:#e5e5e5"></div>
<div style="position:absolute;left:85px;top:0;width:1px;height:25px;background:#e5e5e5"></div>
<div style="position:absolute;left:212px;top:0;width:1px;height:25px;background:#e5e5e5"></div>
<div style="position:absolute;left:471px;top:0;width:1px;height:25px;background:#e5e5e5"></div>
</div>
<div style="position:absolute;left:0;top:25px;width:471px;height:217px;overflow:hidden">
<div class="row" style="top:0px;height:19px;width:471px;background:#ffffff">
<div class="c" style="left:3px;height:19px;line-height:19px">0</div>
<div class="c" style="left:89px;height:19px;line-height:19px">0x00007ff83303ab50</div>
<div class="c" style="left:216px;height:19px;line-height:19px">0x00007ff83316b392</div>
</div>
<div class="row" style="top:19px;height:19px;width:471px;background:#f5f5f5">
<div class="c" style="left:3px;height:19px;line-height:19px">1</div>
<div class="c" style="left:89px;height:19px;line-height:19px">0x00007ff83307d880</div>
<div class="c" style="left:216px;height:19px;line-height:19px">0x00007ff83316b470</div>
</div>
<div class="row" style="top:38px;height:19px;width:471px;background:#ffffff">
<div class="c" style="left:3px;height:19px;line-height:19px">2</div>
<div class="c" style="left:89px;height:19px;line-height:19px">0x00007ff8330d2e50</div>
<div class="c" style="left:216px;height:19px;line-height:19px">0x00007ff83316b4a0</div>
</div>
<div class="row" style="top:57px;height:19px;width:471px;background:#f5f5f5">
<div class="c" style="left:3px;height:19px;line-height:19px">3</div>
<div class="c" style="left:89px;height:19px;line-height:19px">0x00007ff83307e430</div>
<div class="c" style="left:216px;height:19px;line-height:19px">0x00007ff83316b4d6</div>
</div>
<div class="row" style="top:76px;height:19px;width:471px;background:#ffffff">
<div class="c" style="left:3px;height:19px;line-height:19px">4</div>
<div class="c" style="left:89px;height:19px;line-height:19px">0x00007ff833056ba0</div>
<div class="c" style="left:216px;height:19px;line-height:19px">0x00007ff83316b512</div>
</div>
<div class="row" style="top:95px;height:19px;width:471px;background:#f5f5f5">
<div class="c" style="left:3px;height:19px;line-height:19px">5</div>
<div class="c" style="left:89px;height:19px;line-height:19px">0x00007ff83307a590</div>
<div class="c" style="left:216px;height:19px;line-height:19px">0x00007ff83316b58a</div>
</div>
<div class="row" style="top:114px;height:19px;width:471px;background:#ffffff">
<div class="c" style="left:3px;height:19px;line-height:19px">6</div>
<div class="c" style="left:89px;height:19px;line-height:19px">0x00007ff833054230</div>
<div class="c" style="left:216px;height:19px;line-height:19px">0x00007ff83316b5de</div>
</div>
<div class="row" style="top:133px;height:19px;width:471px;background:#f5f5f5">
<div class="c" style="left:3px;height:19px;line-height:19px">7</div>
<div class="c" style="left:89px;height:19px;line-height:19px">0x00007ff833054be0</div>
<div class="c" style="left:216px;height:19px;line-height:19px">0x00007ff83316b644</div>
</div>
<div class="row" style="top:152px;height:19px;width:471px;background:#ffffff">
<div class="c" style="left:3px;height:19px;line-height:19px">8</div>
<div class="c" style="left:89px;height:19px;line-height:19px">0x00007ff833052930</div>
<div class="c" style="left:216px;height:19px;line-height:19px">0x00007ff83316b692</div>
</div>
<div class="row" style="top:171px;height:19px;width:471px;background:#f5f5f5">
<div class="c" style="left:3px;height:19px;line-height:19px">9</div>
<div class="c" style="left:89px;height:19px;line-height:19px">0x00007ff833075dc0</div>
<div class="c" style="left:216px;height:19px;line-height:19px">0x00007ff83316b6ce</div>
</div>
<div class="row" style="top:190px;height:19px;width:471px;background:#ffffff">
<div class="c" style="left:3px;height:19px;line-height:19px">10</div>
<div class="c" style="left:89px;height:19px;line-height:19px">0x00007ff833064d20</div>
<div class="c" style="left:216px;height:19px;line-height:19px">0x00007ff83316b704</div>
</div>
<div class="row" style="top:209px;height:19px;width:471px;background:#f5f5f5">
<div class="c" style="left:3px;height:19px;line-height:19px">11</div>
<div class="c" style="left:89px;height:19px;line-height:19px">0x00007ff8330d6d50</div>
<div class="c" style="left:216px;height:19px;line-height:19px">0x00007ff83316b724</div>
</div>
</div>
<div style="position:absolute;left:472px;top:0;width:16px;height:242px;background:#f0f0f0"></div><div style="position:absolute;left:479px;top:17px;width:2px;height:190px;background:#8a8a8a"></div>
</div>
<div class="t" style="left:6px;top:900px;font-size:13px;line-height:16px">Symbol path not configured.</div>
<div class="t" style="right:237px;top:899px;font-size:13px;line-height:16px">Endpoints: 3/217</div>
<div style="position:absolute;left:1352px;top:898px;width:1px;height:17px;background:#d5d5d5"></div>
<div class="t" style="right:120px;top:899px;font-size:13px;line-height:16px">Interfaces: 320/320</div>
<div style="position:absolute;left:1469px;top:898px;width:1px;height:17px;background:#d5d5d5"></div>
<div class="t" style="right:2px;top:899px;font-size:13px;line-height:16px">Processes: 172/172</div>
<div style="position:absolute;left:0px;top:918px;width:1587px;height:48px;background:#dce8f5;border-top:1px solid #cdd5dd"></div>
<svg style="position:absolute;left:18px;top:924px" width="34" height="32" viewBox="0 0 34 32"><defs><linearGradient id="sun" x1="0" y1="0" x2="1" y2="1"><stop offset="0" stop-color="#fbb224"/><stop offset="1" stop-color="#ec6a12"/></linearGradient></defs><circle cx="13" cy="17" r="10" fill="url(#sun)"/><circle cx="19.5" cy="8" r="7.5" fill="#c8221c"/><text x="19.5" y="12" font-family="Liberation Sans" font-size="10" fill="#fff" text-anchor="middle">1</text></svg>
<div class="t" style="left:50px;top:927px;font-size:12px;line-height:14px;color:#1a1a1a">18°C</div>
<svg style="position:absolute;left:50px;top:943px" width="24" height="12" viewBox="0 0 24.00 12"><path transform="translate(0.00,0)" d="M1 2.5h3v7h-3zM1 6h3M5.5 2h6M6 3.5h5M5.5 5h6.5M6.5 6.5h4.5v5M6.5 6.5v5.5M6.5 8.5h4.5M6.5 10h4.5M8.8 .5v4.5" fill="none" stroke="#555" stroke-width="1.00"/><path transform="translate(12.00,0)" d="M1.5 1.5h4v4h-4zM1.5 3.5h4M1.5 1.5v9l3.5-1.5M2.5 7l3 4.5M7 1.5h4v10l-1 .5M7 1.5v8.5l-1.2 2M7 5h4M7 8h4" fill="none" stroke="#555" stroke-width="1.00"/></svg>
<svg style="position:absolute;left:494px;top:931px" width="23" height="23" viewBox="0 0 23 23"><defs><linearGradient id="wn" x1="0" y1="0" x2="1" y2="1"><stop offset="0" stop-color="#4cc2ff"/><stop offset="1" stop-color="#0a78d6"/></linearGradient></defs><rect x="0" y="0" width="11" height="11" rx="1" fill="url(#wn)"/><rect x="12" y="0" width="11" height="11" rx="1" fill="url(#wn)"/><rect x="0" y="12" width="11" height="11" rx="1" fill="url(#wn)"/><rect x="12" y="12" width="11" height="11" rx="1" fill="url(#wn)"/></svg>
<div style="position:absolute;left:530px;top:926px;width:219px;height:31px;border-radius:16px;background:#f4f7fb;border:1px solid #d7dee6"></div>
<svg style="position:absolute;left:541px;top:935px" width="16" height="16" viewBox="0 0 16 16"><circle cx="6.5" cy="6.5" r="5" fill="none" stroke="#222" stroke-width="1.6"/><path d="M10.2 10.2L14.5 14.5" stroke="#222" stroke-width="1.8"/></svg>
<svg style="position:absolute;left:567px;top:936px" width="26" height="13" viewBox="0 0 24.00 12"><path transform="translate(0.00,0)" d="M1 4.5h4M3 1v10.5l-1.2 .5M.5 9.5l4.5-2M6 1.5h6v4h-6zM9 .5v6M6.5 7.5h5l-5 5M7 8.5l5 4" fill="none" stroke="#444" stroke-width="1.02"/><path transform="translate(12.00,0)" d="M6.5 .5v2.5M1 2h11M1.5 3.5v2M11.5 3.5v2M6 5l-3 3h7l-6 3M3 11l-2 1.5M9.5 10.5l2 2M6.5 9v3.5" fill="none" stroke="#444" stroke-width="1.02"/></svg>
<svg style="position:absolute;left:696px;top:931px" width="48" height="25" viewBox="0 0 48 25"><defs><radialGradient id="sky" cx="0.5" cy="0.6" r="0.7"><stop offset="0" stop-color="#8fd0c0"/><stop offset="0.5" stop-color="#5a70b8"/><stop offset="1" stop-color="#c8d8f0"/></radialGradient></defs><path d="M3 22C0 10 12 1 24 1s24 9 21 21z" fill="url(#sky)"/><path d="M4 22l8-5 6 2 7-6 6 5 5-2 8 6z" fill="#262a5c"/><circle cx="14" cy="6" r="1" fill="#fff"/><circle cx="28" cy="4" r="1" fill="#fff"/><circle cx="36" cy="9" r="1" fill="#fff"/><circle cx="9" cy="12" r="0.8" fill="#fff"/></svg>
<svg style="position:absolute;left:762px;top:930px" width="24" height="24" viewBox="0 0 24 24"><defs><linearGradient id="eg" x1="0" y1="0" x2="0.8" y2="1"><stop offset="0" stop-color="#2fb2ee"/><stop offset="0.55" stop-color="#1477d2"/><stop offset="1" stop-color="#0b4a9c"/></linearGradient><linearGradient id="eg2" x1="0" y1="0" x2="1" y2="0.6"><stop offset="0" stop-color="#35c6e6"/><stop offset="1" stop-color="#5ad25a"/></linearGradient></defs><circle cx="12" cy="12" r="11.5" fill="url(#eg)"/><path d="M3 9C5 3.5 10 1 14.5 1.5 19.5 2.5 23.5 7 23.5 11.5 23.5 15 20.5 16.5 17.5 16.5 15.5 16.5 14 16 13 15 15.5 14 16.5 12 15.5 10 14 7.5 10 6.5 7 7.5 5.5 8 4 8.5 3 9z" fill="url(#eg2)"/><ellipse cx="11" cy="13.5" rx="3.2" ry="3" fill="#0e5fb4"/></svg>
<svg style="position:absolute;left:805px;top:931px" width="25" height="22" viewBox="0 0 25 22"><path d="M0 2a1 1 0 0 1 1-1h8l2 2h13a1 1 0 0 1 1 1v17H0z" fill="#f3b51a"/><rect x="0" y="6" width="25" height="16" rx="1" fill="#fcd04a"/><rect x="4" y="15" width="17" height="7" rx="2" fill="#1577cf"/></svg>
<div style="position:absolute;left:815px;top:957px;width:7px;height:3px;background:#6f737a;border-radius:2px"></div>
<svg style="position:absolute;left:850px;top:930px" width="24" height="24" viewBox="0 0 24 24"><rect width="24" height="24" rx="3" fill="#e61c24"/><text x="11" y="15" font-family="Liberation Sans" font-weight="bold" font-style="italic" font-size="13" fill="#fff" text-anchor="middle">T+</text><rect x="5" y="18" width="14" height="3" fill="#f7a0a0"/></svg>
<svg style="position:absolute;left:894px;top:930px" width="24" height="24" viewBox="0 0 24 24"><circle cx="14.5" cy="9.5" r="7" fill="#fff" stroke="#f07f0a" stroke-width="3"/><path d="M9.5 14.5L2.5 21.5" stroke="#f07f0a" stroke-width="4" stroke-linecap="round"/></svg>
<div style="position:absolute;left:903px;top:957px;width:7px;height:3px;background:#6f737a;border-radius:2px"></div>
<svg style="position:absolute;left:938px;top:933px" width="24" height="19" viewBox="0 0 24 19"><rect x="0.5" y="0.5" width="23" height="18" fill="#eef3f8" stroke="#9aa4b0"/><path d="M1 17L4 12l2 3 3-9 2 6 2-2 2 4 2-8 2 7 3 2v2H1z" fill="#4fb4e8"/></svg>
<div style="position:absolute;left:947px;top:957px;width:7px;height:3px;background:#6f737a;border-radius:2px"></div>
<svg style="position:absolute;left:982px;top:932px" width="23" height="21" viewBox="0 0 23 21"><rect x="1" y="0" width="22" height="14" fill="#2b2b2b"/><path d="M3 2.5h18M3 5.5h18M3 8.5h18M3 11.5h18" stroke="#8a8a8a" stroke-width="1" stroke-dasharray="1.5 1"/><circle cx="9" cy="11" r="4" fill="#9cc0dc" stroke="#6a8aa0"/><path d="M6 14L1 20" stroke="#555" stroke-width="1.5"/></svg>
<div style="position:absolute;left:991px;top:957px;width:7px;height:3px;background:#6f737a;border-radius:2px"></div>
<svg style="position:absolute;left:1026px;top:932px" width="23" height="20" viewBox="0 0 23 20"><rect x="0.5" y="0.5" width="22" height="19" fill="#fff" stroke="#8a8a8a"/><rect x="1" y="1" width="21" height="1.5" fill="#777"/><rect x="3" y="5" width="9" height="12" fill="#3a9a6a"/><path d="M14 6h5M14 9h5M14 12h5M14 15h5" stroke="#999"/><rect x="20" y="4" width="1.5" height="7" fill="#2a9a4a"/></svg>
<div style="position:absolute;left:1035px;top:957px;width:7px;height:3px;background:#6f737a;border-radius:2px"></div>
<div style="position:absolute;left:1063px;top:923px;width:38px;height:38px;border-radius:5px;background:#eaf3fc;border:1px solid #e0eaf4"></div>
<svg style="position:absolute;left:1071px;top:932px" width="22" height="19" viewBox="0 0 22 19"><defs><linearGradient id="rv" x1="0" y1="0" x2="1" y2="1"><stop offset="0" stop-color="#8a4a80"/><stop offset="0.5" stop-color="#3e1434"/><stop offset="1" stop-color="#1a0612"/></linearGradient></defs><rect x="0" y="0" width="22" height="2" fill="#c8c0c4"/><rect x="0" y="2" width="22" height="15" fill="url(#rv)"/><rect x="0" y="17" width="22" height="2" fill="#b0a8ac"/><path d="M3 10h6l1-8 1.5 12 1.5-4h6" fill="none" stroke="#f4e4ec" stroke-width="1.1"/></svg>
<div style="position:absolute;left:1074px;top:958px;width:16px;height:3px;background:#0f6cbd;border-radius:2px"></div>
<svg style="position:absolute;left:1233px;top:934px" width="17" height="17" viewBox="0 0 17 17"><circle cx="10.5" cy="6.5" r="4.8" fill="#fff" stroke="#f07f0a" stroke-width="2.2"/><path d="M7 10L2 15" stroke="#f07f0a" stroke-width="3" stroke-linecap="round"/></svg>
<svg style="position:absolute;left:1265px;top:934px" width="15" height="14" viewBox="0 0 15 14"><rect width="15" height="14" rx="1.5" fill="#6e6e6e"/><text x="7.5" y="10.5" font-family="Liberation Sans" font-size="9" font-weight="bold" fill="#fff" text-anchor="middle">vm</text></svg>
<svg style="position:absolute;left:1299px;top:935px" width="12" height="13" viewBox="0 0 12 13"><rect width="12" height="7" fill="#8d959e"/><rect y="7" width="12" height="6" fill="#4ab0f0"/></svg>
<svg style="position:absolute;left:1331px;top:933px" width="15" height="17" viewBox="0 0 15 17"><rect x="3" y="0.5" width="5" height="4" fill="none" stroke="#222"/><rect x="1" y="4.5" width="8" height="12" rx="1" fill="none" stroke="#222"/><path d="M9 13l2 2 3.5-4" fill="none" stroke="#222"/></svg>
<svg style="position:absolute;left:1362px;top:933px" width="16" height="17" viewBox="0 0 16 17"><path d="M7 0.5L13 3v5c0 4-3 7-6 8-3-1-6-4-6-8V3z" fill="#1e8fd8"/><path d="M11 8l5 8.5H6z" fill="#f6c31a"/><path d="M11 11v2.5M11 14.5v1" stroke="#222" stroke-width="1"/></svg>
<svg style="position:absolute;left:1394px;top:934px" width="20" height="17" viewBox="0 0 20 17"><rect x="1.5" y="4" width="17" height="7" fill="none" stroke="#222" stroke-width="1.4"/><path d="M10 0v17" stroke="#222" stroke-width="1.4"/></svg>
<svg style="position:absolute;left:1425px;top:933px" width="17" height="18" viewBox="0 0 17 18"><rect x="0.7" y="2" width="12" height="10" fill="none" stroke="#222" stroke-width="1.2"/><path d="M6.5 12v4M3 16.5h8" stroke="#222" stroke-width="1.2"/><rect x="11.5" y="0.5" width="4" height="6" rx="2" fill="#dfe9f4" stroke="#222"/><path d="M13.5 6.5v7" stroke="#222"/></svg>
<svg style="position:absolute;left:1449px;top:934px" width="17" height="16" viewBox="0 0 17 16"><path d="M1 5.5h3l4-4v13l-4-4H1z" fill="none" stroke="#222" stroke-width="1.1"/><path d="M10.5 5.5c1 1.5 1 3.5 0 5M12.5 3.5c2 2.5 2 6.5 0 9M14.5 1.5c3 3.5 3 9.5 0 13" fill="none" stroke="#222" stroke-width="1.1"/></svg>
<div class="t" style="left:1500px;top:927px;font-size:12px;line-height:14px;width:44px;text-align:right;color:#1a1a1a">9:38</div>
<div class="t" style="left:1484px;top:944px;font-size:12px;line-height:14px;color:#1a1a1a">2024/10/12</div>
<svg style="position:absolute;left:1553px;top:936px" width="14" height="15" viewBox="0 0 14 15"><path d="M7 0.5c3 0 5 2.5 5 5.5v4l2 2.5H0l2-2.5V6c0-3 2-5.5 5-5.5z" fill="#0f3ea8"/><path d="M5 13.5a2 2 0 0 0 4 0" fill="#0f3ea8"/></svg>
<div style="position:absolute;left:341px;top:92px;width:184px;height:23px;border:3px solid #ff0000;border-radius:2px"></div>
<div style="position:absolute;left:525px;top:82px;width:32px;height:32px;border-radius:50%;background:#ff1000;color:#fff;font-size:20px;line-height:32px;text-align:center">1</div>
<div style="position:absolute;left:3px;top:601px;width:1075px;height:294px;border:3px solid #ff0000;border-radius:2px"></div>
<div style="position:absolute;left:82px;top:601px;width:32px;height:32px;border-radius:50%;background:#ff1000;color:#fff;font-size:20px;line-height:32px;text-align:center">2</div>
<div style="position:absolute;left:108px;top:819px;width:239px;height:19px;border:2px solid #ff0000;border-radius:2px"></div>
<div style="position:absolute;left:385px;top:811px;width:32px;height:32px;border-radius:50%;background:#ff1000;color:#fff;font-size:20px;line-height:32px;text-align:center">3</div>
<div style="position:absolute;left:1135px;top:90px;width:411px;height:188px;border:2px solid #ff0000;border-radius:2px"></div>
<div style="position:absolute;left:1434px;top:97px;width:32px;height:32px;border-radius:50%;background:#ff1000;color:#fff;font-size:20px;line-height:32px;text-align:center">4</div>
</body></html>
